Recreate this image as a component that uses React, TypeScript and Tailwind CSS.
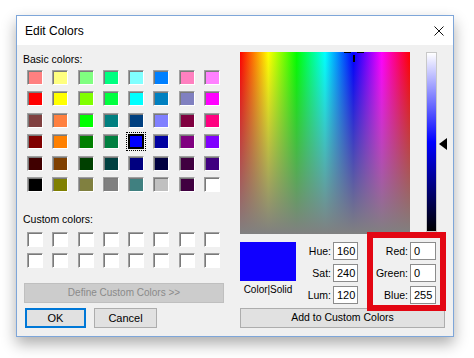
import React from 'react';

const basicColors = [
  ['#ff8080', '#ffff80', '#80ff80', '#00ff80', '#80ffff', '#0080ff', '#ff80c0', '#ff80ff'],
  ['#ff0000', '#ffff00', '#80ff00', '#00ff40', '#00ffff', '#0080c0', '#8080c0', '#ff00ff'],
  ['#804040', '#ff8040', '#00ff00', '#008080', '#004080', '#8080ff', '#800040', '#ff0080'],
  ['#800000', '#ff8000', '#008000', '#008040', '#0000ff', '#0000a0', '#800080', '#8000ff'],
  ['#400000', '#804000', '#004000', '#004040', '#000080', '#000040', '#400040', '#400080'],
  ['#000000', '#808000', '#808040', '#808080', '#408080', '#c0c0c0', '#400040', '#ffffff'],
];

const Swatch: React.FC<{ color: string; selected?: boolean }> = ({ color, selected }) => (
  <div
    className={
      selected
        ? 'w-[16px] h-[15px] border-2 border-black outline-1 outline-dotted outline-black outline-offset-[1px]'
        : 'w-[16px] h-[15px] border border-t-[#a0a0a0] border-l-[#a0a0a0] border-b-white border-r-white shadow-[inset_1px_1px_0_#7a7a7a]'
    }
    style={{ backgroundColor: color }}
  />
);

const Field: React.FC<{ value: string; w: string }> = ({ value, w }) => (
  <div className={`${w} h-[18px] bg-white border border-[#8c8c8c] pl-[3px] leading-[16px] text-[11px]`}>{value}</div>
);

const App: React.FC = () => {
  return (
    <div className="relative w-[474px] h-[358px] bg-white overflow-hidden pt-[15px] pl-[16px] font-['Liberation_Sans',Arial,sans-serif] text-black">
      {/* Dialog window */}
      <div className="w-[438px] h-[322px] border border-[#7ea6d9] flex flex-col shadow-[0_7px_14px_rgba(0,0,0,0.32)]">
        {/* Title bar */}
        <div className="h-[29px] bg-white flex items-center justify-between pl-[8px] pr-[9px]">
          <span className="text-[12px]">Edit Colors</span>
          <svg width="10" height="10" viewBox="0 0 10 10">
            <path d="M0.5 0.5 L9.5 9.5 M9.5 0.5 L0.5 9.5" stroke="#111" strokeWidth="1" />
          </svg>
        </div>

        {/* Client area */}
        <div className="flex-1 bg-[#f0f0f0] flex pl-[6px] pt-[6px] text-[10.5px]">
          {/* Left column */}
          <div className="w-[201px] flex flex-col">
            <div className="h-[16px] leading-[16px]">Basic colors:</div>
            <div className="mt-[3px] pl-[4px] grid grid-cols-[repeat(8,16px)] gap-x-[9.3px] gap-y-[6.4px]">
              {basicColors.flatMap((row, r) =>
                row.map((c, i) => <Swatch key={`${r}-${i}`} color={c} selected={r === 3 && i === 4} />)
              )}
            </div>
            <div className="mt-[19px] h-[16px] leading-[16px]">Custom colors:</div>
            <div className="mt-[5px] pl-[4px] grid grid-cols-[repeat(8,16px)] gap-x-[9.3px] gap-y-[6px]">
              {Array.from({ length: 16 }).map((_, i) => (
                <Swatch key={i} color="#ffffff" />
              ))}
            </div>
            <div className="mt-[15px] ml-[1px] w-[200px] h-[20px] bg-[#cccccc] border border-[#bfbfbf] flex items-center justify-center text-[10px] text-[#8a8a8a]">
              Define Custom Colors &gt;&gt;
            </div>
            <div className="mt-[5px] flex">
              <div className="ml-[2px] w-[61px] h-[20px] bg-[#e1e1e1] border border-[#0078d7] shadow-[inset_0_0_0_1px_#0078d7] flex items-center justify-center text-[11px]">
                OK
              </div>
              <div className="ml-[8px] w-[63px] h-[20px] bg-[#e1e1e1] border border-[#adadad] flex items-center justify-center text-[11px]">
                Cancel
              </div>
            </div>
          </div>

          {/* Right column */}
          <div className="ml-[16px] pt-[1px] flex flex-col">
            <div className="flex">
              <div className="relative w-[170px] h-[182px] overflow-hidden bg-[linear-gradient(to_bottom,rgba(128,128,128,0),#808080),linear-gradient(to_right,#ff0000,#ffff00,#00ff00,#00ffff,#0000ff,#ff00ff,#ff0000)]">
                <svg className="absolute left-[103px] top-[-2px]" width="22" height="14" viewBox="0 0 22 14">
                  <rect x="1" y="1" width="7" height="2" fill="#000" />
                  <rect x="14" y="1" width="7" height="2" fill="#000" />
                  <rect x="10" y="5" width="2" height="7" fill="#000" />
                </svg>
              </div>
              <div className="ml-[16px] w-[11px] h-[180px] border border-[#c8c8c8] bg-[linear-gradient(to_bottom,#ffffff,#0000ff_50%,#000000)]" />
              <div className="ml-[2px] mt-[86px]">
                <svg width="8" height="12" viewBox="0 0 8 12">
                  <polygon points="8,0 0,6 8,12" fill="#000" />
                </svg>
              </div>
            </div>

            <div className="mt-[8px] flex">
              <div className="w-[56px] flex flex-col items-center">
                <div className="w-[56px] h-[39px] bg-[#1000ff]" />
                <div className="mt-[3px] leading-[12px] text-[10px]">Color|Solid</div>
              </div>
              <div className="w-[37px] flex flex-col gap-[4px]">
                {['Hue:', 'Sat:', 'Lum:'].map((l) => (
                  <div key={l} className="h-[18px] leading-[18px] text-right pr-[2px]">{l}</div>
                ))}
              </div>
              <div className="flex flex-col gap-[4px]">
                <Field value="160" w="w-[25px]" />
                <Field value="240" w="w-[25px]" />
                <Field value="120" w="w-[25px]" />
              </div>
              <div className="w-[52px] flex flex-col gap-[4px]">
                {['Red:', 'Green:', 'Blue:'].map((l) => (
                  <div key={l} className="h-[18px] leading-[18px] text-right pr-[2px]">{l}</div>
                ))}
              </div>
              <div className="flex flex-col gap-[4px]">
                <Field value="0" w="w-[26px]" />
                <Field value="0" w="w-[26px]" />
                <Field value="255" w="w-[26px]" />
              </div>
            </div>

            <div className="mt-[4px] w-[205px] h-[20px] bg-[#e1e1e1] border border-[#adadad] flex items-center justify-center text-[10.5px]">
              Add to Custom Colors
            </div>
          </div>
        </div>
      </div>

      {/* Red annotation box */}
      <div className="absolute left-[367px] top-[232px] w-[79px] h-[79px] border-[6px] border-[#e30613]" />
    </div>
  );
};

export default App;
